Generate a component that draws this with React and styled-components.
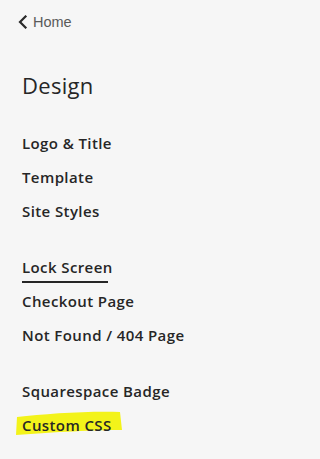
import * as React from "react";
import styled, { createGlobalStyle } from "styled-components";

const GlobalStyle = createGlobalStyle`
  html, body {
    margin: 0;
    padding: 0;
    background: #f6f6f6;
  }
  body {
    font-family: "Open Sans", "Liberation Sans", sans-serif;
  }
`;

const ChevronLeft = () => (
  <svg width="11" height="14" viewBox="0 0 11 14" aria-hidden="true">
    <path d="M8.5 1.5 L3 7 L8.5 12.5" fill="none" stroke="#2a2a2a" strokeWidth="2.2" strokeLinecap="square" />
  </svg>
);

const Highlight = () => (
  <HighlightSvg viewBox="0 0 108 26" preserveAspectRatio="none" aria-hidden="true">
    <path
      d="M2 6 C30 3 70 0 105 1 L107 19 C80 19 40 21 1 24 Z"
      fill="#f3f31a"
    />
  </HighlightSvg>
);

const groups = [
  ["Logo & Title", "Template", "Site Styles"],
  ["Lock Screen", "Checkout Page", "Not Found / 404 Page"],
  ["Squarespace Badge", "Custom CSS"],
];

function App() {
  return (
    <>
      <GlobalStyle />
      <Panel>
        <BackLink href="#">
          <ChevronLeft />
          <span>Home</span>
        </BackLink>
        <Title>Design</Title>
        <Nav>
          {groups.map((items, gi) => (
            <Group key={gi}>
              {items.map((label) => (
                <NavItem key={label}>
                  <NavLabel $active={label === "Lock Screen"}>
                    {label === "Custom CSS" && <Highlight />}
                    <LabelText>{label}</LabelText>
                  </NavLabel>
                </NavItem>
              ))}
            </Group>
          ))}
        </Nav>
      </Panel>
    </>
  );
}

const Panel = styled.div`
  width: 213px;
  height: 459px;
  box-sizing: border-box;
  padding: 12px 0 0 22px;
  background: #f6f6f6;
  overflow: hidden;
`;

const BackLink = styled.a`
  display: flex;
  align-items: center;
  gap: 5px;
  height: 20px;
  margin-left: -5px;
  color: #5a5a5a;
  text-decoration: none;
  font: 400 14.5px/20px "Liberation Sans", Arial, sans-serif;
`;

const Title = styled.h1`
  margin: 38px 0 0;
  font: 400 22px/30px "Open Sans", sans-serif;
  color: #262626;
  letter-spacing: 0.3px;
`;

const Nav = styled.nav`
  display: flex;
  flex-direction: column;
  gap: 22px;
  margin-top: 26px;
`;

const Group = styled.div`
  display: flex;
  flex-direction: column;
`;

const NavItem = styled.div`
  height: 34px;
  display: flex;
  align-items: center;
`;

const NavLabel = styled.span`
  position: relative;
  display: inline-block;
  font: 600 15px/20px "Open Sans", sans-serif;
  color: #262626;
  letter-spacing: 0.4px;
  &::after {
    content: "";
    display: ${(p) => (p.$active ? "block" : "none")};
    position: absolute;
    left: 0;
    right: 5px;
    bottom: -6px;
    height: 2px;
    background: #262626;
  }
`;

const LabelText = styled.span`
  position: relative;
`;

const HighlightSvg = styled.svg`
  position: absolute;
  left: -7px;
  top: -4px;
  width: 108px;
  height: 26px;
`;

export default App;
